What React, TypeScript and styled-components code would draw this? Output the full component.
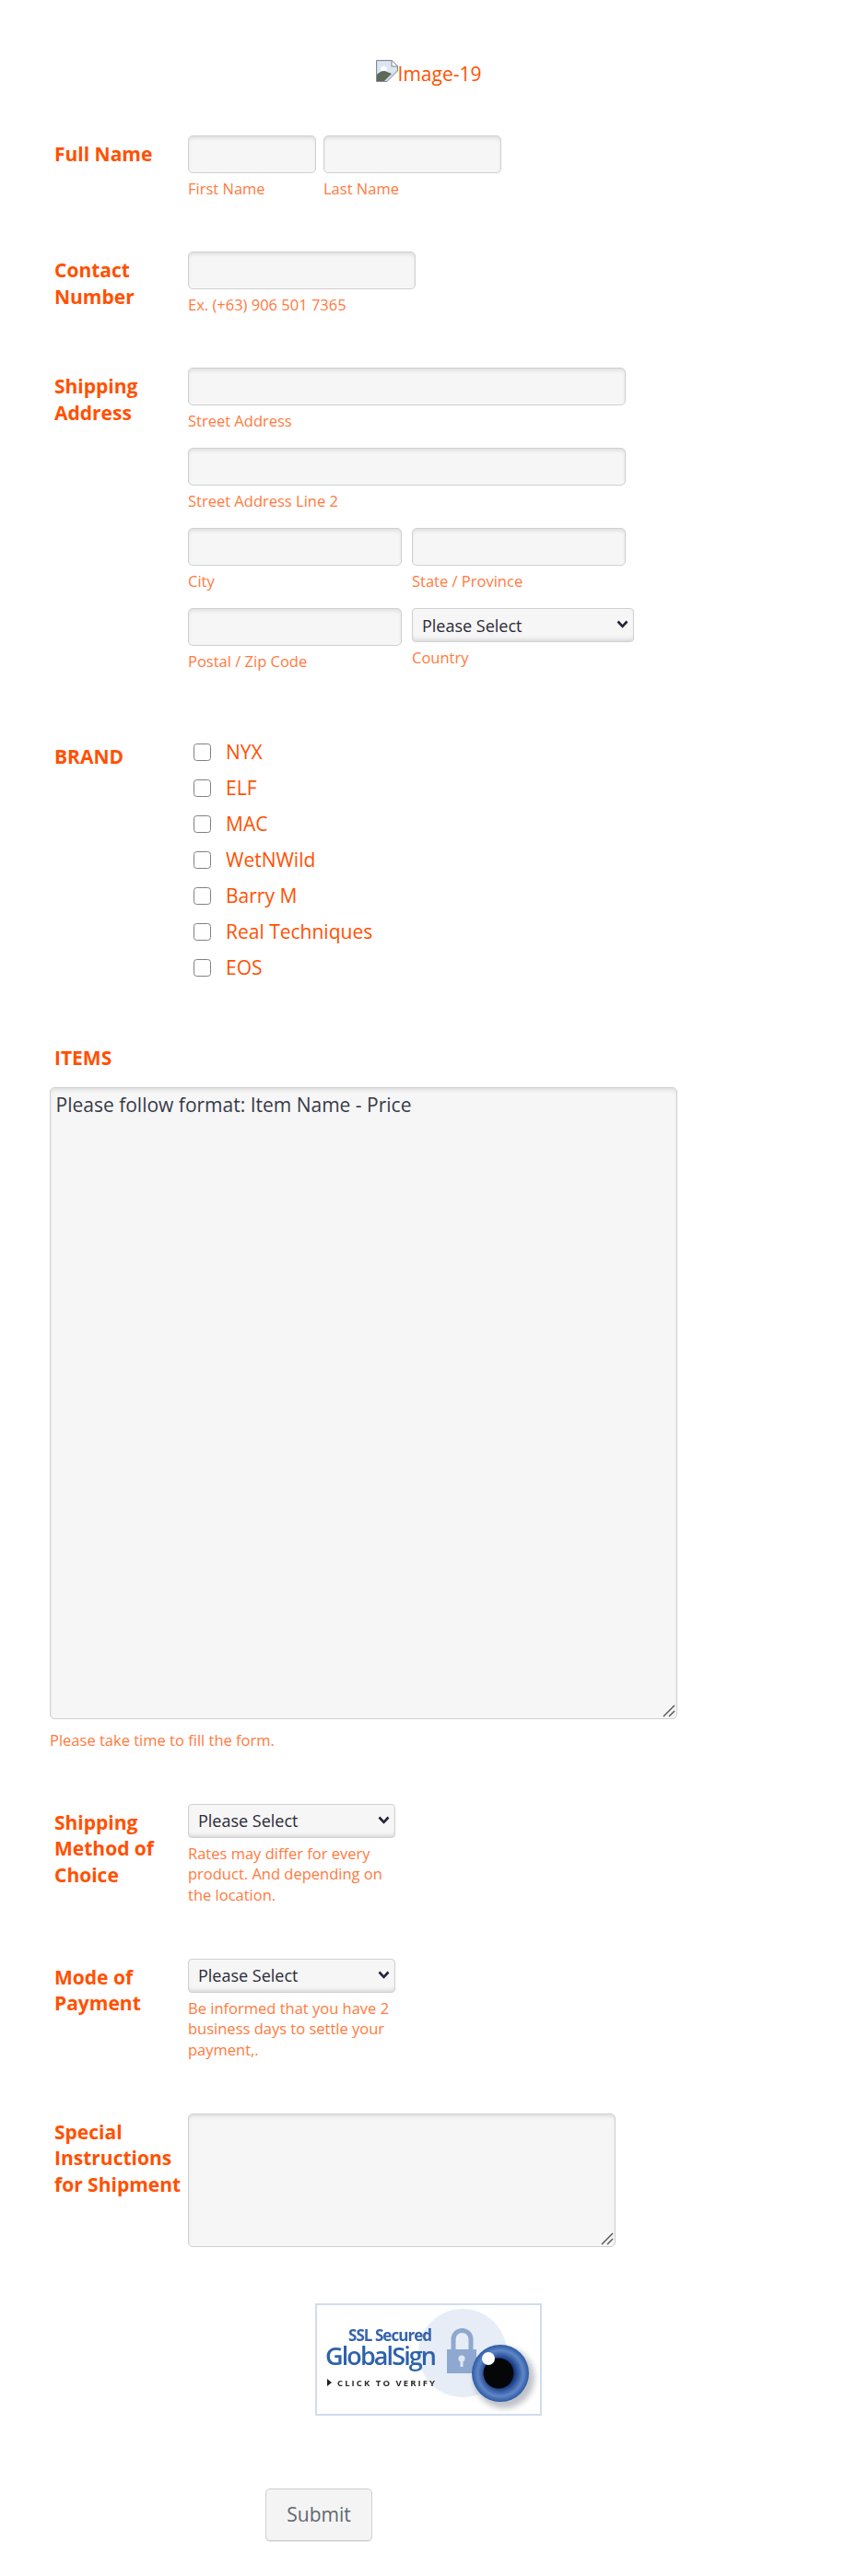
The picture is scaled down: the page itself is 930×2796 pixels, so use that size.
import styled, { createGlobalStyle } from 'styled-components';

const GlobalStyle = createGlobalStyle`
  html, body {
    margin: 0;
    padding: 0;
    background: #fff;
  }
  body {
    font-family: "Open Sans", "Liberation Sans", sans-serif;
    color: #ff5100;
  }
`;

// Overall page
const Page = styled.form`
  width: 930px;
  height: 2796px;
  box-sizing: border-box;
  overflow: hidden;
`;

const Header = styled.div`
  height: 147px;
  box-sizing: border-box;
  padding-top: 65px;
  display: flex;
  justify-content: center;
  align-items: flex-start;
  font-size: 21px;
  line-height: 30px;
`;

const Row = styled.div<{ $gap?: number }>`
  display: flex;
  padding-left: 59px;
  margin-bottom: ${({ $gap }) => $gap ?? 56.5}px;
`;

const Label = styled.label<{ $top?: number }>`
  width: 145px;
  flex: none;
  box-sizing: border-box;
  padding-top: ${({ $top }) => $top ?? 6}px;
  font-size: 21px;
  line-height: 28.5px;
  font-weight: 700;
  color: #ff5100;
`;

const Field = styled.div<{ $width?: number }>`
  display: flex;
  flex-direction: column;
  width: ${({ $width }) => ($width ? `${$width}px` : 'auto')};
`;

const Pair = styled.div<{ $gap: number }>`
  display: flex;
  gap: ${({ $gap }) => $gap}px;
`;

const Stack = styled.div`
  display: flex;
  flex-direction: column;
  gap: 17.5px;
`;

const wellStyle = `
  box-sizing: border-box;
  background: #f6f6f6;
  border: 1.5px solid #d0d0d0;
  border-radius: 5px;
  box-shadow: inset 0 3px 4px -1px rgba(0, 0, 0, 0.1);
  outline: none;
`;

const TextInput = styled.input`
  ${wellStyle}
  display: block;
  height: 41px;
  width: 100%;
  padding: 0 8px;
  font: 18px "Open Sans", sans-serif;
`;

const Hint = styled.span<{ $top?: number }>`
  display: block;
  margin-top: ${({ $top }) => $top ?? 6}px;
  font-size: 16.5px;
  line-height: 22.5px;
  color: #ff7a3d;
`;

const chevron = encodeURIComponent(
  '<svg xmlns="http://www.w3.org/2000/svg" width="13" height="9" viewBox="0 0 13 9"><path d="M1.500 1.500L6.500 6.800L11.500 1.500" fill="none" stroke="#23233a" stroke-width="2.600"/></svg>',
);

const Select = styled.select`
  appearance: none;
  box-sizing: border-box;
  display: block;
  height: 37px;
  width: 100%;
  padding: 0 24px 0 10px;
  background-color: #f6f6f6;
  background-image: url("data:image/svg+xml,${chevron}");
  background-repeat: no-repeat;
  background-position: right 5px top 12px;
  border: 1.5px solid #d0d0d0;
  border-radius: 4px;
  box-shadow: inset 0 -4px 4px -2px rgba(0, 0, 0, 0.12);
  font: 18px "Open Sans", sans-serif;
  color: #2b2b38;
`;

const CheckList = styled.div`
  padding-top: 11px;
  display: flex;
  flex-direction: column;
`;

const CheckRow = styled.label`
  display: flex;
  align-items: center;
  height: 39px;
  padding-left: 6px;
  font-size: 21px;
  color: #ff5100;
`;

const CheckBox = styled.input`
  appearance: none;
  box-sizing: border-box;
  width: 19px;
  height: 19px;
  margin: 0 16px 0 0;
  background: #fff;
  border: 1.5px solid #808080;
  border-radius: 3.5px;
`;

const WideBlock = styled.div`
  padding-left: 54px;
  margin-bottom: 57.5px;
`;

const WideLabel = styled.label`
  display: block;
  padding-left: 5px;
  margin-bottom: 17.5px;
  font-size: 21px;
  line-height: 28.5px;
  font-weight: 700;
`;

const AreaWrap = styled.div<{ $width: number }>`
  position: relative;
  width: ${({ $width }) => $width}px;
`;

const TextArea = styled.textarea<{ $height: number }>`
  ${wellStyle}
  display: block;
  width: 100%;
  height: ${({ $height }) => $height}px;
  padding: 4px 5.5px;
  font: 21px/28.5px "Open Sans", sans-serif;
  color: #363a48;
  resize: none;
`;

// Stands in for the browser's grip, which is larger in the reference
const Grip = styled.svg`
  position: absolute;
  right: 2px;
  bottom: 2px;
`;

const Seal = styled.div`
  display: flex;
  justify-content: center;
  margin-bottom: 79px;
`;

const SubmitRow = styled.div`
  padding-left: 288px;
`;

const SubmitButton = styled.button`
  width: 116px;
  height: 57px;
  box-sizing: border-box;
  background: #f4f4f4;
  border: 1.5px solid #cfcfcf;
  border-radius: 5px;
  box-shadow: 0 1px 1px rgba(0, 0, 0, 0.1);
  font: 21px "Open Sans", sans-serif;
  color: #5f6870;
`;

const brands = ['NYX', 'ELF', 'MAC', 'WetNWild', 'Barry M', 'Real Techniques', 'EOS'];

const BrokenImage = () => (
  <svg width="24" height="24" viewBox="0 0 24 24">
    <path d="M0.500 0.500H17L23.500 7V12L12 23.500H0.500Z" fill="#c9d7ea" stroke="#8a8a8a" />
    <path d="M2 2H16V8H22V11L11 22H2Z" fill="#dbe6f4" />
    <path d="M5 10a3.500 3 0 0 1 7 0a3 2 0 0 1 -7 0Z" fill="#fff" />
    <path d="M1 23V16Q7 10 12 13L17 15L9 23Z" fill="#5c6a58" />
    <path d="M17 0.500V7H23.500Z" fill="#fff" stroke="#8a8a8a" />
    <path d="M23.500 13L13 23.500H23.500Z" fill="#fff" />
  </svg>
);

const ResizeGrip = () => (
  <Grip width="14" height="14" viewBox="0 0 14 14">
    <path d="M1 13L13 1M7 13L13 7" stroke="#5a5a5a" strokeWidth="1.500" />
  </Grip>
);

const GlobalSignSeal = () => (
  <svg width="246" height="122" viewBox="0 0 246 122">
    <defs>
      <radialGradient id="iris">
        <stop offset="0.5" stopColor="#163a84" />
        <stop offset="0.8" stopColor="#5f86c6" />
        <stop offset="1" stopColor="#2c5aa6" />
      </radialGradient>
      <filter id="soft" x="-30%" y="-30%" width="160%" height="160%">
        <feGaussianBlur stdDeviation="3" />
      </filter>
      <filter id="ink">
        <feGaussianBlur stdDeviation="0.35" />
      </filter>
    </defs>
    <rect x="1" y="1" width="244" height="120" fill="#fff" stroke="#d0dcec" strokeWidth="2" />
    <circle cx="160" cy="54" r="48" fill="#e7edf6" />
    <g filter="url(#ink)">
      <path d="M150 52V39a9.500 9.500 0 0 1 19 0V52" fill="none" stroke="#8ea8d0" strokeWidth="5" />
      <rect x="143" y="50" width="32" height="26" fill="#8ea8d0" />
      <circle cx="159" cy="60" r="3.500" fill="#dfe7f3" />
      <rect x="157.500" y="60" width="3" height="9" fill="#dfe7f3" />
      <text x="36" y="41" fontFamily="Open Sans" fontWeight="700" fontSize="17" fill="#3563ad" textLength="91">SSL Secured</text>
      <text x="11" y="67" fontFamily="Open Sans" fontWeight="600" fontSize="27" fill="#2f62ab" textLength="121">GlobalSign</text>
      <path d="M13 82L18 86L13 90Z" fill="#222" />
      <text x="24" y="90" fontFamily="Open Sans" fontWeight="700" fontSize="9.500" fill="#2b2b2b" textLength="106">CLICK TO VERIFY</text>
    </g>
    <ellipse cx="205" cy="81" rx="33" ry="33" fill="#8a8f99" opacity="0.55" filter="url(#soft)" />
    <circle cx="201" cy="76" r="31" fill="url(#iris)" />
    <circle cx="199" cy="76" r="16.500" fill="#050608" />
    <circle cx="188" cy="60" r="7" fill="#fff" />
  </svg>
);

const App = () => {
  return (
    <Page>
      <GlobalStyle />
      <Header>
        <BrokenImage />
        <span>Image-19</span>
      </Header>

      <Row>
        <Label>Full Name</Label>
        <Pair $gap={8}>
          <Field $width={139}>
            <TextInput />
            <Hint>First Name</Hint>
          </Field>
          <Field $width={193}>
            <TextInput />
            <Hint>Last Name</Hint>
          </Field>
        </Pair>
      </Row>

      <Row>
        <Label>Contact Number</Label>
        <Field $width={247}>
          <TextInput />
          <Hint>Ex. (+63) 906 501 7365</Hint>
        </Field>
      </Row>

      <Row $gap={56}>
        <Label>Shipping Address</Label>
        <Stack>
          <Field $width={475}>
            <TextInput />
            <Hint>Street Address</Hint>
          </Field>
          <Field $width={475}>
            <TextInput />
            <Hint>Street Address Line 2</Hint>
          </Field>
          <Pair $gap={11}>
            <Field $width={232}>
              <TextInput />
              <Hint>City</Hint>
            </Field>
            <Field $width={232}>
              <TextInput />
              <Hint>State / Province</Hint>
            </Field>
          </Pair>
          <Pair $gap={11}>
            <Field $width={232}>
              <TextInput />
              <Hint>Postal / Zip Code</Hint>
            </Field>
            <Field $width={241}>
              <Select>
                <option>Please Select</option>
              </Select>
              <Hint>Country</Hint>
            </Field>
          </Pair>
        </Stack>
      </Row>

      <Row $gap={64}>
        <Label $top={21}>BRAND</Label>
        <CheckList>
          {brands.map((brand) => (
            <CheckRow key={brand}>
              <CheckBox type="checkbox" />
              {brand}
            </CheckRow>
          ))}
        </CheckList>
      </Row>

      <WideBlock>
        <WideLabel>ITEMS</WideLabel>
        <AreaWrap $width={681}>
          <TextArea $height={686} defaultValue="Please follow format: Item Name - Price" />
          <ResizeGrip />
        </AreaWrap>
        <Hint $top={12}>Please take time to fill the form.</Hint>
      </WideBlock>

      <Row $gap={57.5}>
        <Label>Shipping Method of Choice</Label>
        <Field $width={225}>
          <Select>
            <option>Please Select</option>
          </Select>
          <Hint>Rates may differ for every product. And depending on the location.</Hint>
        </Field>
      </Row>

      <Row $gap={57.5}>
        <Label>Mode of Payment</Label>
        <Field $width={225}>
          <Select>
            <option>Please Select</option>
          </Select>
          <Hint>Be informed that you have 2 business days to settle your payment,.</Hint>
        </Field>
      </Row>

      <Row $gap={61}>
        <Label>Special Instructions for Shipment</Label>
        <AreaWrap $width={464}>
          <TextArea $height={145} />
          <ResizeGrip />
        </AreaWrap>
      </Row>

      <Seal>
        <GlobalSignSeal />
      </Seal>

      <SubmitRow>
        <SubmitButton type="button">Submit</SubmitButton>
      </SubmitRow>
    </Page>
  );
};

export default App;
